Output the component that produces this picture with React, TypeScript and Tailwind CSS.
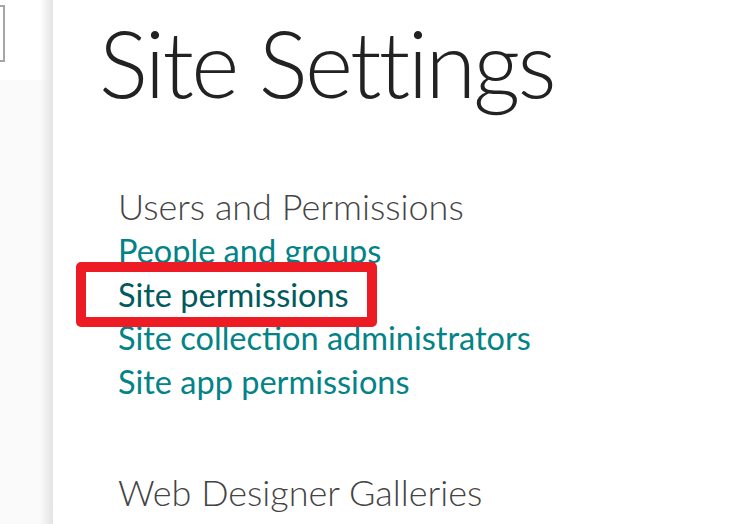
import React from "react";

export default function App() {
  const font = { fontFamily: 'Lato, "Open Sans", sans-serif' };
  return (
    <div className="flex h-[524px] w-[731px] overflow-hidden bg-white" style={font}>
      <div className="relative w-[53px] shrink-0 flex flex-col">
        <div className="h-[80px] bg-white pt-[5px]">
          <div className="h-[57px] w-[5px] border-y-2 border-r-2 border-[#a6a6a6]" />
        </div>
        <div className="flex-1 bg-[#fafafa]" />
        <div className="absolute right-0 top-0 h-full w-[13px] bg-gradient-to-r from-transparent to-[#e3e3e3]" />
      </div>
      <div className="flex flex-col pl-[46px] pt-[3px]">
        <h1 className="text-[92px] font-light leading-[120px] tracking-[-2.7px] text-[#222]">Site Settings</h1>
        <div className="mt-[62px] pl-[19px]">
          <div className="text-[36px] font-light leading-[43px] text-[#444]">Users and Permissions</div>
          <div className="mt-[1px] text-[32.5px] leading-[43.5px] text-[#038387]">People and groups</div>
          <div className="relative text-[32.5px] leading-[43.5px] text-[#005b5e]">
            Site permissions
            <div className="absolute left-[-42px] top-[-11px] h-[65px] w-[301px] rounded-[5px] border-[10px] border-[#ed1c24]" />
          </div>
          <div className="text-[32.5px] leading-[43.5px] text-[#038387]">Site collection administrators</div>
          <div className="text-[32.5px] leading-[43.5px] text-[#038387]">Site app permissions</div>
          <div className="mt-[68px] text-[36px] font-light leading-[43px] text-[#444]">Web Designer Galleries</div>
        </div>
      </div>
    </div>
  );
}
